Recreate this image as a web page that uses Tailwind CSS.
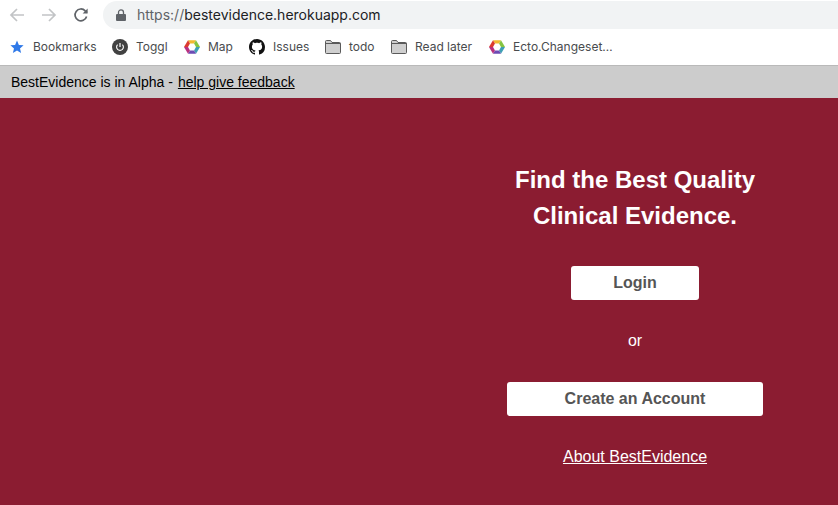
<!doctype html>
<html>
<head>
<meta charset="utf-8">
<script src="https://cdn.jsdelivr.net/npm/@tailwindcss/browser@4"></script>
</head>
<body class="m-0 h-[505px] w-[838px] overflow-hidden bg-[#8b1c31] font-['Liberation_Sans',sans-serif]">
<div class="flex h-[29px] items-center bg-white">
  <div class="flex w-[103px] items-center pl-[9px]">
    <svg class="h-4 w-4" viewBox="0 0 16 16" fill="none" stroke="#c2c4c6" stroke-width="1.7"><path d="M15 8H2M8 2 2 8l6 6"/></svg>
    <svg class="ml-4 h-4 w-4" viewBox="0 0 16 16" fill="none" stroke="#c2c4c6" stroke-width="1.7"><path d="M1 8h13M8 2l6 6-6 6"/></svg>
    <svg class="ml-4 h-4 w-4" viewBox="0 0 16 16" fill="none" stroke="#5f6368" stroke-width="1.7"><path d="M13.6 9.5A5.9 5.9 0 1 1 12.2 3.8L14 5.6"/><path d="M14.6 1.6v5h-5" fill="#5f6368" stroke="none"/></svg>
  </div>
  <div class="flex h-[28px] flex-1 items-center rounded-l-[14px] bg-[#f1f3f4] pl-[13px]">
    <svg class="h-[12px] w-[10px]" viewBox="0 0 10 12"><path d="M1 5h8a1 1 0 0 1 1 1v5a1 1 0 0 1-1 1H1a1 1 0 0 1-1-1V6a1 1 0 0 1 1-1Z" fill="#5f6368"/><path d="M2.5 5V3.4a2.5 2.5 0 0 1 5 0V5" fill="none" stroke="#5f6368" stroke-width="1.3"/></svg>
    <span class="ml-[11px] font-['Inter',sans-serif] text-[14px] text-[#5f6368]">https://<span class="text-[#202124]">bestevidence.herokuapp.com</span></span>
  </div>
</div>
<div class="flex h-[37px] items-center whitespace-nowrap border-b border-[#b9b9b9] bg-white pb-[1px] font-['Inter',sans-serif] text-[12px] text-[#494b4e]">
  <svg class="ml-[10px] h-[14px] w-[14px]" viewBox="0 0 14 14"><path d="m7 .6 1.9 4.3 4.7.4-3.6 3.1 1.1 4.6L7 10.6l-4.1 2.4L4 8.4.4 5.3l4.7-.4Z" fill="#2f79e8"/></svg>
  <span class="ml-[9px] w-[63px]">Bookmarks</span>
  <svg class="ml-[16px] h-4 w-4" viewBox="0 0 16 16"><circle cx="8" cy="8" r="8" fill="#414141"/><path d="M5.6 5.6a3.4 3.4 0 1 0 4.8 0" fill="none" stroke="#fff" stroke-width="1.1"/><path d="M8 4v4" stroke="#fff" stroke-width="1.2"/></svg>
  <span class="ml-[8px] w-[32px]">Toggl</span>
  <svg class="ml-[16px] h-4 w-4" viewBox="0 0 16 16"><path d="M4 1.2h8L8 8Z" fill="#f2b92f"/><path d="M12 1.2 16 8 8 8Z" fill="#86c440"/><path d="M16 8l-4 6.8L8 8Z" fill="#3f9fb5"/><path d="M12 14.8H4L8 8Z" fill="#6c4bb4"/><path d="M4 14.8 0 8l8 0Z" fill="#b8307f"/><path d="M0 8l4-6.8L8 8Z" fill="#dc3b2f"/><path d="M6 4.6h4L12 8l-2 3.4H6L4 8Z" fill="#fff"/></svg>
  <span class="ml-[8px] w-[24px]">Map</span>
  <svg class="ml-[17px] h-4 w-4" viewBox="0 0 16 16"><path fill="#111" d="M8 0C3.58 0 0 3.58 0 8c0 3.54 2.29 6.53 5.47 7.59.4.07.55-.17.55-.38 0-.19-.01-.82-.01-1.49-2.01.37-2.53-.49-2.69-.94-.09-.23-.48-.94-.82-1.13-.28-.15-.68-.52-.01-.53.63-.01 1.08.58 1.23.82.72 1.21 1.87.87 2.33.66.07-.52.28-.87.51-1.07-1.78-.2-3.64-.89-3.64-3.95 0-.87.31-1.59.82-2.15-.08-.2-.36-1.02.08-2.12 0 0 .67-.21 2.2.82.64-.18 1.32-.27 2-.27s1.36.09 2 .27c1.53-1.04 2.2-.82 2.2-.82.44 1.1.16 1.92.08 2.12.51.56.82 1.27.82 2.15 0 3.07-1.87 3.75-3.65 3.95.29.25.54.73.54 1.48 0 1.07-.01 1.93-.01 2.2 0 .21.15.46.55.38A8.01 8.01 0 0 0 16 8c0-4.42-3.58-8-8-8Z"/></svg>
  <span class="ml-[8px] w-[36px]">Issues</span>
  <svg class="ml-[16px] h-[14px] w-4" viewBox="0 0 16 14"><path d="M.5 12.5v-11a1 1 0 0 1 1-1h4l1.5 2h7.5a1 1 0 0 1 1 1v9a1 1 0 0 1-1 1h-13a1 1 0 0 1-1-1Z" fill="#cfcfcf" stroke="#5a5a5a"/><path d="M.5 3.5h15" stroke="#5a5a5a"/></svg>
  <span class="ml-[8px] w-[26px]">todo</span>
  <svg class="ml-[16px] h-[14px] w-4" viewBox="0 0 16 14"><path d="M.5 12.5v-11a1 1 0 0 1 1-1h4l1.5 2h7.5a1 1 0 0 1 1 1v9a1 1 0 0 1-1 1h-13a1 1 0 0 1-1-1Z" fill="#cfcfcf" stroke="#5a5a5a"/><path d="M.5 3.5h15" stroke="#5a5a5a"/></svg>
  <span class="ml-[8px] w-[57px]">Read later</span>
  <svg class="ml-[17px] h-4 w-4" viewBox="0 0 16 16"><path d="M4 1.2h8L8 8Z" fill="#f2b92f"/><path d="M12 1.2 16 8 8 8Z" fill="#86c440"/><path d="M16 8l-4 6.8L8 8Z" fill="#3f9fb5"/><path d="M12 14.8H4L8 8Z" fill="#6c4bb4"/><path d="M4 14.8 0 8l8 0Z" fill="#b8307f"/><path d="M0 8l4-6.8L8 8Z" fill="#dc3b2f"/><path d="M6 4.6h4L12 8l-2 3.4H6L4 8Z" fill="#fff"/></svg>
  <span class="ml-[8px]">Ecto.Changeset…</span>
</div>
<div class="flex h-[32px] items-center bg-[#cccccc] pl-[11px] text-[14px] text-black">BestEvidence is in Alpha -<a class="ml-[5px] underline" href="#">help give feedback</a></div>
<main class="flex">
  <div class="w-[432px]"></div>
  <div class="flex w-[406px] flex-col items-center pt-[64px] text-white">
    <h1 class="text-center text-[24px] font-bold leading-[36px]">Find the Best Quality<br>Clinical Evidence.</h1>
    <a href="#" class="mt-[32px] flex h-[34px] w-[128px] items-center justify-center rounded-[3px] bg-white text-[16px] font-bold text-[#555555]">Login</a>
    <p class="mt-[29px] text-[16px] leading-[24px]">or</p>
    <a href="#" class="mt-[29px] flex h-[34px] w-[256px] items-center justify-center rounded-[3px] bg-white text-[16px] font-bold text-[#555555]">Create an Account</a>
    <a href="#" class="mt-[29px] text-[16px] leading-[24px] underline">About BestEvidence</a>
  </div>
</main>
</body>
</html>
